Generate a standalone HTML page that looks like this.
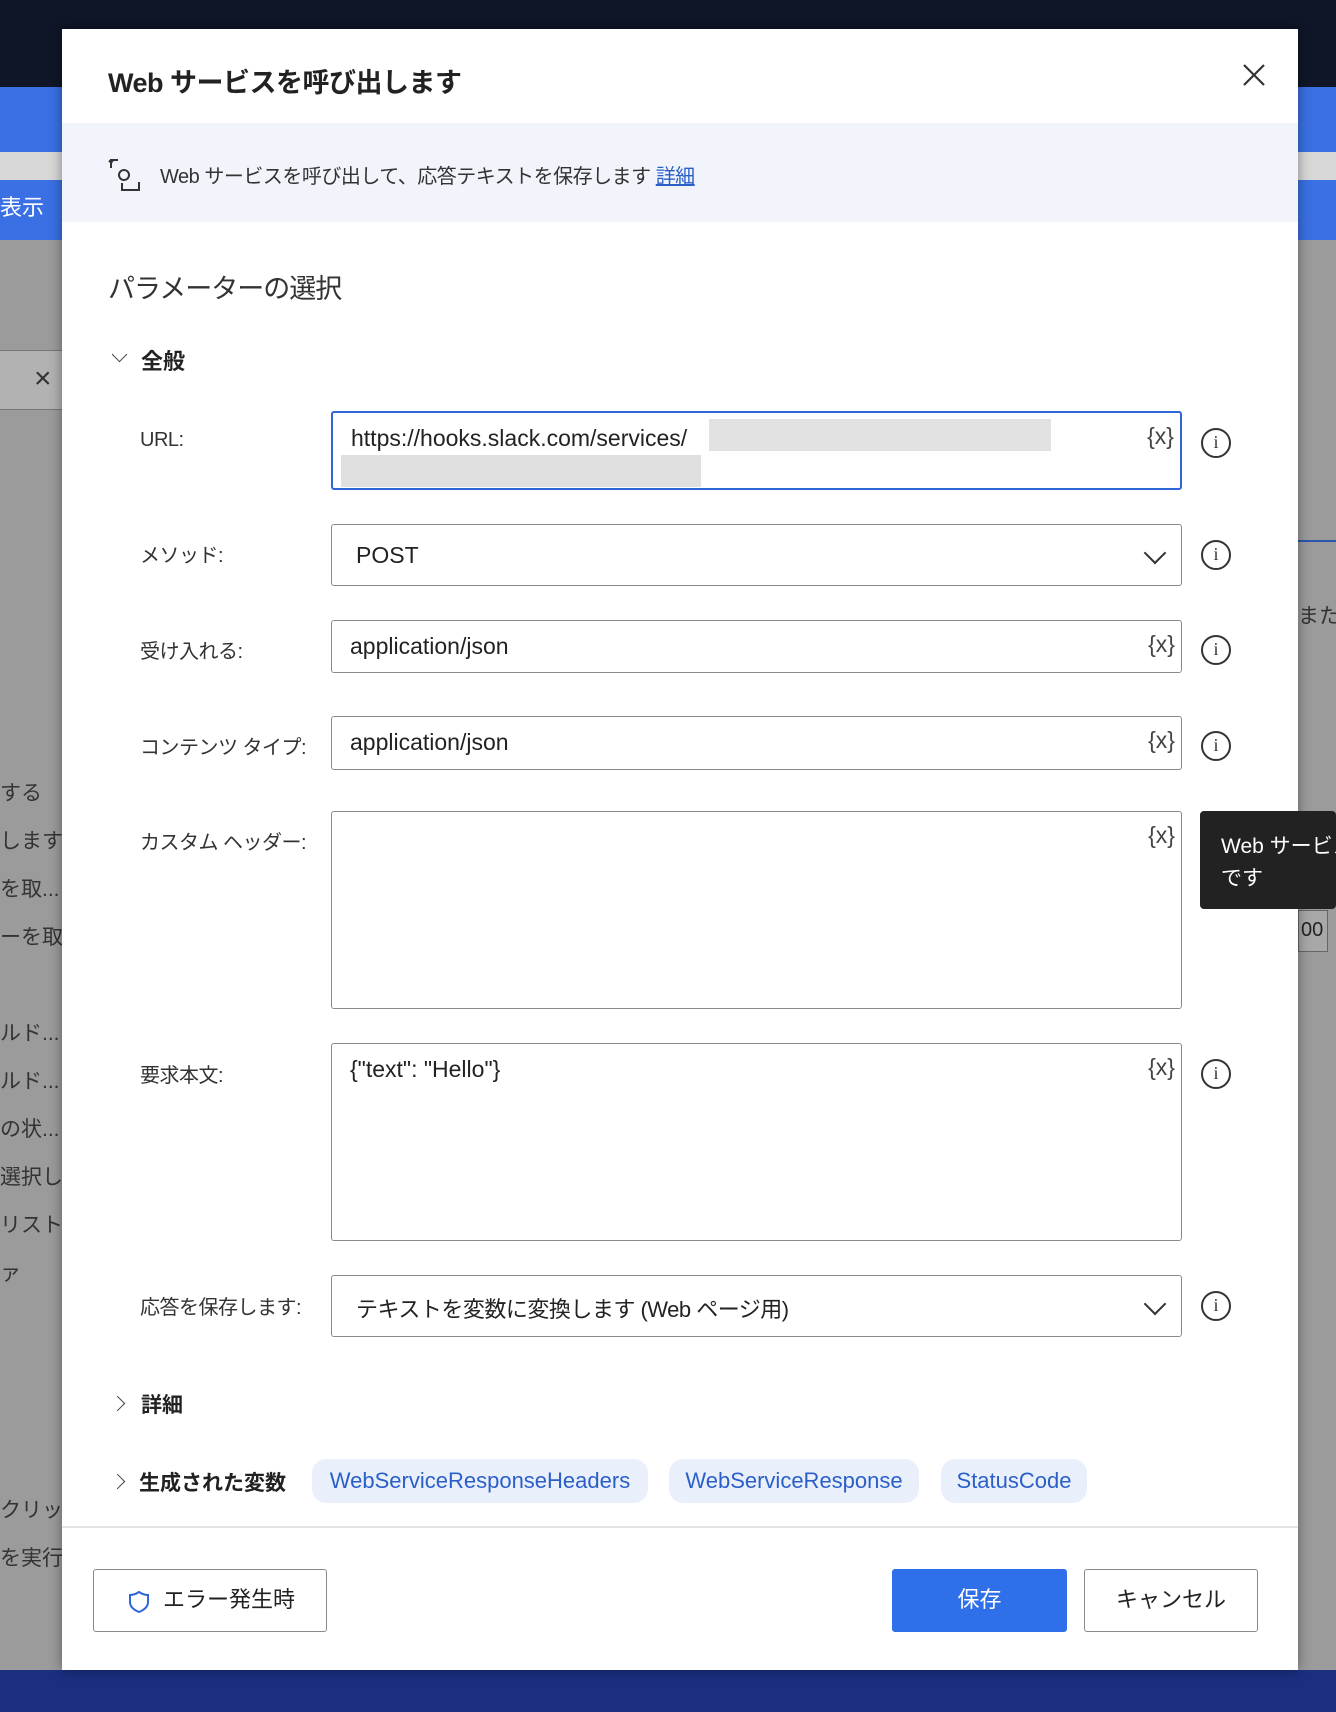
<!DOCTYPE html>
<html><head><meta charset="utf-8"><style>
*{margin:0;padding:0;box-sizing:border-box}
body{width:1336px;height:1712px;position:relative;overflow:hidden;background:#9b9b9b;font-family:"Liberation Sans","Noto Sans CJK JP",sans-serif;color:#222}
.a{position:absolute}
.dlg{left:62px;top:29px;width:1236px;height:1641px;background:#fff;box-shadow:0 0 12px rgba(0,0,0,.4)}
.lbl{position:absolute;left:78px;font-size:20px;color:#333;letter-spacing:-0.5px}
.inp{position:absolute;left:269px;width:851px;border:1.5px solid #8a8a8a;border-radius:3px;background:#fff;font-size:23px;color:#222}
.inp .t{position:absolute;left:18px;top:12px}
.fx{position:absolute;right:6px;top:10px;font-size:23px;color:#444}
.info{position:absolute;left:1139px;width:30px;height:30px;border:2px solid #333;border-radius:50%;font-size:18px;text-align:center;line-height:25px;font-family:"Liberation Serif",serif;color:#333}
.chev{position:absolute;right:18px;top:20px;width:16px;height:16px;border-right:2px solid #333;border-bottom:2px solid #333;transform:rotate(45deg)}
.pill{position:absolute;top:1430px;height:44px;border-radius:14px;background:#e9f0fc;color:#2b5fc8;font-size:22px;line-height:44px;text-align:center}
.btn{position:absolute;top:1540px;height:63px;border:1.5px solid #8a8a8a;border-radius:3px;font-size:22px;line-height:60px;text-align:center}
</style></head><body>
<div class="a" style="left:0;top:0;width:1336px;height:87px;background:#0e1628"></div>
<div class="a" style="left:0;top:87px;width:1336px;height:153px;background:#3a70e3"></div>
<div class="a" style="left:0;top:152px;width:1336px;height:28px;background:#d8d8d8"></div>
<div class="a" style="left:0;top:190px;font-size:22px;color:#fff">表示</div>
<div class="a" style="left:0;top:350px;width:62px;height:60px;background:#b2b2b2;border-top:1px solid #777;border-bottom:1px solid #777"></div>
<div class="a" style="left:34px;top:362px;font-size:30px;color:#333">×</div>
<div class="a" style="left:0;top:1670px;width:1336px;height:42px;background:#1a2f80"></div>
<div class="a" style="left:0;top:770px;font-size:21px;color:#333;line-height:48px;white-space:nowrap">する<br>します<br>を取...<br>ーを取..<br><br>ルド...<br>ルド...<br>の状...<br>選択し..<br>リスト...<br>ァ</div>
<div class="a" style="left:0;top:1487px;font-size:21px;color:#333;line-height:48px;white-space:nowrap">クリック<br>を実行</div>
<div class="a" style="left:1298px;top:600px;font-size:21px;color:#333;white-space:nowrap">また</div>
<div class="a" style="left:1298px;top:540px;width:38px;height:2px;background:#2a56b0"></div>
<div class="a" style="left:1298px;top:910px;width:30px;height:42px;border:1.5px solid #666;background:#a8a8a8;font-size:20px;padding:8px 0 0 2px">00</div>

<div class="a dlg">
 <div class="a" style="left:46px;top:32px;font-size:27px;color:#222;font-weight:bold;letter-spacing:-0.5px">Web サービスを呼び出します</div>
 <svg class="a" style="left:1180px;top:34px" width="24" height="24" viewBox="0 0 24 24" stroke="#333" stroke-width="2.2"><path d="M2 2L22 22M22 2L2 22"/></svg>
 <div class="a" style="left:0;top:94px;width:1236px;height:99px;background:#f1f5fb"></div>
 <svg class="a" style="left:46px;top:128px" width="34" height="36" viewBox="0 0 34 36" fill="none" stroke="#333" stroke-width="2"><path d="M10 3H3v8M3 3l-2 2M3 3l2 2"/><circle cx="16" cy="18" r="5"/><path d="M24 33h7v-8M14 26v7h10"/></svg>
 <div class="a" style="left:98px;top:131px;font-size:20px;color:#333;letter-spacing:-0.5px">Web サービスを呼び出して、応答テキストを保存します <span style="color:#2b5fc8;text-decoration:underline">詳細</span></div>
 <div class="a" style="left:46px;top:238px;font-size:27px;color:#333;letter-spacing:-1px">パラメーターの選択</div>
 <div class="a" style="left:52px;top:320px;width:11px;height:11px;border-right:1.5px solid #444;border-bottom:1.5px solid #444;transform:rotate(45deg)"></div>
 <div class="a" style="left:79px;top:315px;font-size:22px;color:#222;font-weight:bold">全般</div>

 <div class="lbl" style="top:400px">URL:</div>
 <div class="inp" style="top:382px;height:79px;border:2px solid #2f66d8"><div class="t">https://hooks.slack.com/services/</div>
  <div class="a" style="left:376px;top:6px;width:342px;height:32px;background:#e2e2e2"></div>
  <div class="a" style="left:8px;top:42px;width:360px;height:32px;background:#e0e0e0"></div>
  <div class="fx">{x}</div></div>
 <div class="info" style="top:399px">i</div>

 <div class="lbl" style="top:510px">メソッド:</div>
 <div class="inp" style="top:495px;height:62px"><div class="t" style="top:17px;left:24px">POST</div><div class="chev"></div></div>
 <div class="info" style="top:511px">i</div>

 <div class="lbl" style="top:606px">受け入れる:</div>
 <div class="inp" style="top:591px;height:53px"><div class="t">application/json</div><div class="fx">{x}</div></div>
 <div class="info" style="top:606px">i</div>

 <div class="lbl" style="top:702px">コンテンツ タイプ:</div>
 <div class="inp" style="top:687px;height:54px"><div class="t">application/json</div><div class="fx">{x}</div></div>
 <div class="info" style="top:702px">i</div>

 <div class="lbl" style="top:797px">カスタム ヘッダー:</div>
 <div class="inp" style="top:782px;height:198px"><div class="fx">{x}</div></div>

 <div class="lbl" style="top:1030px">要求本文:</div>
 <div class="inp" style="top:1014px;height:198px"><div class="t">{"text": "Hello"}</div><div class="fx">{x}</div></div>
 <div class="info" style="top:1030px">i</div>

 <div class="lbl" style="top:1262px">応答を保存します:</div>
 <div class="inp" style="top:1246px;height:62px"><div class="t" style="top:16px;left:24px;font-size:22px;letter-spacing:-0.5px">テキストを変数に変換します (Web ページ用)</div><div class="chev"></div></div>
 <div class="info" style="top:1262px">i</div>

 <div class="a" style="left:50px;top:1369px;width:11px;height:11px;border-right:1.5px solid #444;border-bottom:1.5px solid #444;transform:rotate(-45deg)"></div>
 <div class="a" style="left:79px;top:1360px;font-size:21px;font-weight:bold">詳細</div>
 <div class="a" style="left:50px;top:1447px;width:11px;height:11px;border-right:1.5px solid #444;border-bottom:1.5px solid #444;transform:rotate(-45deg)"></div>
 <div class="a" style="left:77px;top:1438px;font-size:21px;font-weight:bold">生成された変数</div>
 <div class="pill" style="left:250px;width:336px">WebServiceResponseHeaders</div>
 <div class="pill" style="left:607px;width:250px">WebServiceResponse</div>
 <div class="pill" style="left:879px;width:146px">StatusCode</div>
 <div class="a" style="left:0;top:1497px;width:1236px;height:1.5px;background:#e4e4e4"></div>

 <div class="btn" style="left:31px;width:234px">
  <svg style="position:absolute;left:34px;top:20px" width="22" height="24" viewBox="0 0 22 24" fill="none" stroke="#2f66d8" stroke-width="2"><path d="M11 2c3 2 6 3 9 3v7c0 5-4 8-9 10C6 20 2 17 2 12V5c3 0 6-1 9-3z"/></svg>
  <span style="margin-left:38px">エラー発生時</span></div>
 <div class="btn" style="left:830px;width:175px;background:#2f6fea;border-color:#2f6fea;color:#fff">保存</div>
 <div class="btn" style="left:1022px;width:174px">キャンセル</div>
</div>
<div class="a" style="left:1200px;top:811px;width:136px;height:98px;background:#222;border-radius:4px;color:#fff;font-size:21px;padding:20px 0 0 21px;line-height:32px;white-space:nowrap;overflow:hidden">Web サービス<br>です</div>
</body></html>
